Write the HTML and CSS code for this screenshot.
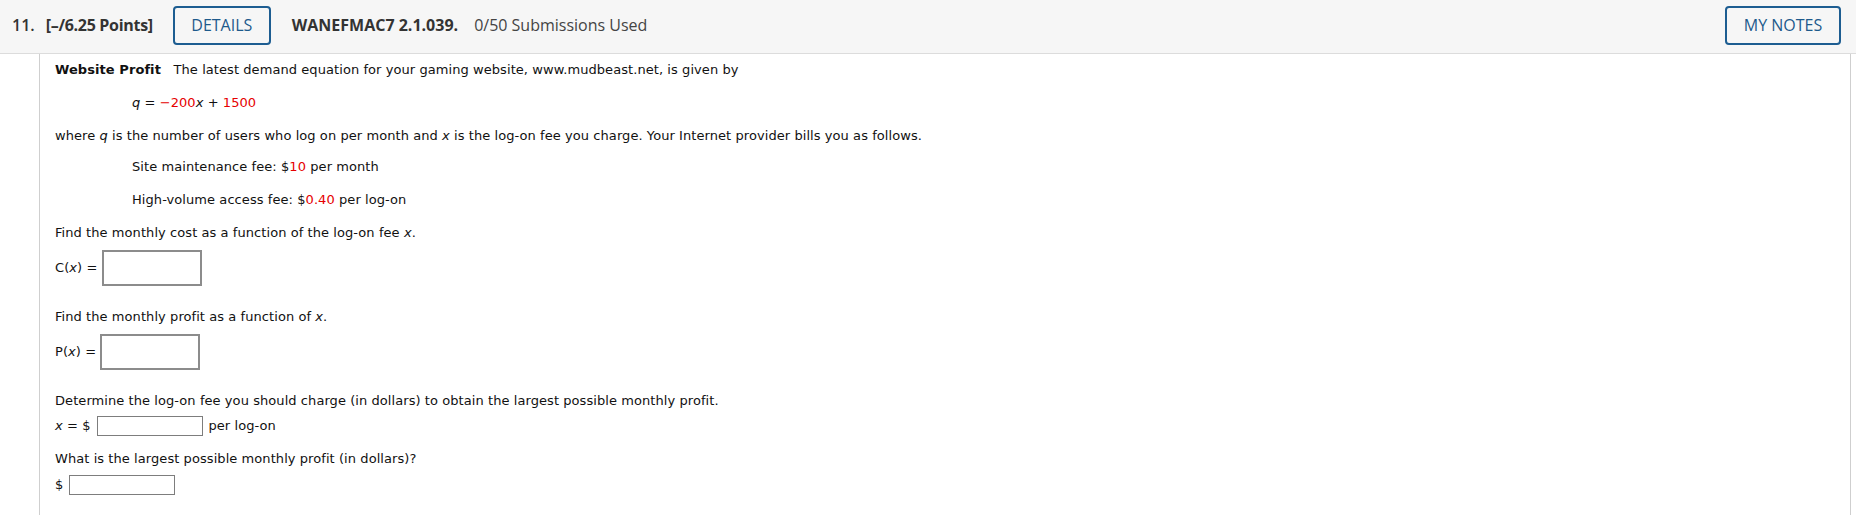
FILE: index.html
```html
<!DOCTYPE html>
<html>
<head>
<meta charset="utf-8">
<link rel="stylesheet" href="styles.css">
</head>
<body>
<div class="question">
  <div class="qhead">
    <span class="qnum">11.</span>
    <span class="qpoints">[–/6.25 Points]</span>
    <span class="btn btn-details">DETAILS</span>
    <span class="qcode">WANEFMAC7 2.1.039.</span>
    <span class="qsubs">0/50 Submissions Used</span>
    <span class="spacer"></span>
    <span class="btn btn-notes">MY NOTES</span>
  </div>
  <div class="qbody">
    <p class="line l1"><b class="title">Website Profit</b>&nbsp;&nbsp; The latest demand equation for your gaming website, www.mudbeast.net, is given by</p>
    <p class="line indent l2"><i>q</i> = <span class="red">−200</span><i>x</i> + <span class="red">1500</span></p>
    <p class="line l3">where <i>q</i> is the number of users who log on per month and <i>x</i> is the log-on fee you charge. Your Internet provider bills you as follows.</p>
    <p class="line indent l4">Site maintenance fee: $<span class="red">10</span> per month</p>
    <p class="line indent l5">High-volume access fee: $<span class="red">0.40</span> per log-on</p>
    <p class="line l6">Find the monthly cost as a function of the log-on fee <i>x</i>.</p>
    <div class="row rowbig r1"><span class="lab">C(<i>x</i>) = </span><span class="box big"></span></div>
    <p class="line l7">Find the monthly profit as a function of <i>x</i>.</p>
    <div class="row rowbig r2"><span class="lab">P(<i>x</i>) = </span><span class="box big"></span></div>
    <p class="line l8">Determine the log-on fee you should charge (in dollars) to obtain the largest possible monthly profit.</p>
    <div class="row r3"><span class="lab"><i>x</i> = $</span><span class="box small"></span><span class="after">per log-on</span></div>
    <p class="line l9">What is the largest possible monthly profit (in dollars)?</p>
    <div class="row r4"><span class="lab">$</span><span class="box small"></span></div>
  </div>
</div>
</body>
</html>
```

FILE: styles.css
```css
html, body {
  margin: 0;
  padding: 0;
  background: #ffffff;
}
body {
  width: 1856px;
  height: 515px;
  overflow: hidden;
}
.question {
  display: flex;
  flex-direction: column;
  height: 515px;
}
.qhead {
  display: flex;
  align-items: center;
  height: 54px;
  box-sizing: border-box;
  padding: 6px 15px 9px 12px;
  background: #f6f6f6;
  border-bottom: 1px solid #dcdcdc;
  font-family: "Open Sans", sans-serif;
  font-size: 16px;
  color: #333333;
}
.qnum {
  font-weight: 600;
  margin-right: 11px;
}
.qpoints {
  font-weight: 700;
  letter-spacing: -0.3px;
  margin-right: 20px;
}
.btn {
  display: flex;
  align-items: center;
  justify-content: center;
  box-sizing: border-box;
  height: 39px;
  border: 2px solid #1d5d91;
  border-radius: 4px;
  color: #1d5a8c;
  font-size: 16px;
}
.btn-details {
  width: 98px;
  margin-right: 21px;
}
.btn-notes {
  width: 116px;
}
.qcode {
  font-weight: 700;
  margin-right: 16px;
}
.qsubs {
  color: #444444;
}
.spacer {
  flex: 1;
}
.qbody {
  flex: 1;
  margin-left: 39px;
  margin-right: 5px;
  border-left: 1px solid #cfcfcf;
  border-right: 1px solid #cfcfcf;
  padding: 8px 15px 0 15px;
  font-family: "DejaVu Sans", Verdana, sans-serif;
  font-size: 13px;
  letter-spacing: 0.07px;
  line-height: 16px;
  color: #111111;
}
.line {
  margin: 0;
  white-space: nowrap;
}
.title {
  font-weight: 700;
  color: #111111;
}
.indent {
  padding-left: 77px;
}
.red {
  color: #e60000;
}
.l2, .l3, .l4, .l5, .l6 {
  margin-top: 17px;
}
.l4 {
  margin-top: 15px;
}
.row {
  display: flex;
  align-items: center;
}
.rowbig {
  margin-top: 9px;
}
.lab {
  white-space: pre;
}
.box {
  display: block;
  box-sizing: border-box;
  background: #ffffff;
  border: 1px solid #7d7d7d;
}
.big {
  width: 100px;
  height: 36px;
  border-width: 2px;
  border-color: #8c8c8c;
}
.small {
  width: 106px;
  height: 20px;
}
.r3 .box {
  margin-left: 7px;
}
.r4 .box {
  margin-left: 6px;
}
.after {
  margin-left: 5px;
}
.l7, .l8 {
  margin-top: 23px;
}
.r3 {
  margin-top: 7px;
}
.l9 {
  margin-top: 15px;
}
.r4 {
  margin-top: 8px;
}
```
